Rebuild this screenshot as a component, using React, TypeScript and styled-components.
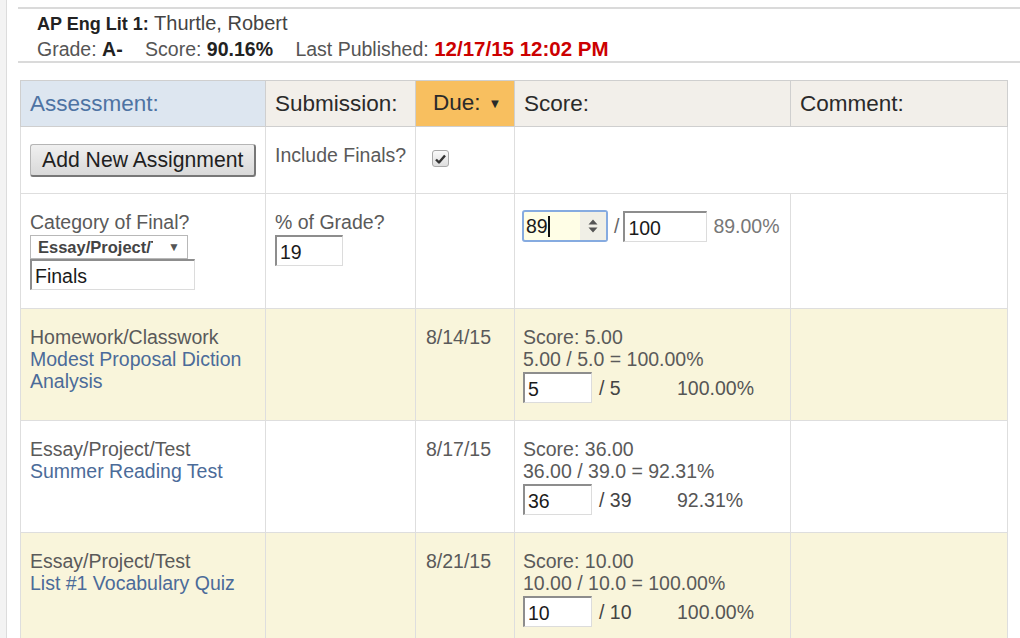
import styled, { createGlobalStyle } from "styled-components";

const GlobalStyle = createGlobalStyle`
  html, body {
    margin: 0;
    padding: 0;
    background: #ffffff;
    font-family: "Liberation Sans", Arial, sans-serif;
  }
`;

const Page = styled.div`
  display: flex;
  min-height: 638px;
`;

const SideStrip = styled.div`
  width: 6px;
  flex: none;
  background: #f3f3f3;
  border-right: 1px solid #dcdcdc;
`;

const Main = styled.main`
  flex: 1;
  padding-top: 7px;
`;

const InfoBar = styled.header`
  margin-left: 11px;
  border-top: 2px solid #dadada;
  border-bottom: 2px solid #dadada;
  padding: 2px 0 0 19px;
  font-size: 19.5px;
  color: #555;
`;

const InfoLine = styled.div`
  height: 25px;
  line-height: 25px;
  white-space: nowrap;
`;

const Strong = styled.b<{ $red?: boolean; $size?: number }>`
  color: ${(p) => (p.$red ? "#cc0000" : "#222")};
  font-weight: bold;
  font-size: ${(p) => (p.$size ? `${p.$size}px` : "inherit")};
`;

const Name = styled.span`
  color: #444;
  font-size: 20px;
`;

const Gap = styled.span`
  display: inline-block;
  width: 17px;
`;

const Table = styled.table`
  margin: 17px 0 0 13px;
  border-collapse: collapse;
  table-layout: fixed;
  width: 987px;
  font-size: 19.5px;
  line-height: 22px;
  color: #5a5a5a;
`;

const HeadCell = styled.th<{ $tone?: "blue" | "orange" }>`
  height: 45px;
  padding: 0 0 0 9px;
  text-align: left;
  font-weight: normal;
  font-size: 22.5px;
  border: 1px solid #cfcfcf;
  color: ${(p) => (p.$tone === "blue" ? "#4e73a3" : "#2a2a2a")};
  background: ${(p) =>
    p.$tone === "blue" ? "#dde6f0" : p.$tone === "orange" ? "#f8bf5f" : "#f2efea"};
  padding-left: ${(p) => (p.$tone === "orange" ? "17px" : "9px")};
`;

const Arrow = styled.span`
  font-size: 13px;
  margin-left: 8px;
  vertical-align: 2px;
`;

const Row = styled.tr<{ $h: number; $shade?: boolean }>`
  height: ${(p) => p.$h}px;
  background: ${(p) => (p.$shade ? "#f9f5db" : "#ffffff")};
`;

const Cell = styled.td<{ $pad?: number }>`
  vertical-align: top;
  border: 1px solid #dedede;
  padding: 17px 0 0 ${(p) => p.$pad ?? 9}px;
  white-space: nowrap;
  overflow: hidden;
`;

const Link = styled.div`
  color: #4b6b99;
`;

const Button = styled.button`
  margin: 0;
  height: 33px;
  padding: 0 11px;
  font-family: "Liberation Sans", Arial, sans-serif;
  font-size: 21.2px;
  color: #1f1f1f;
  background: linear-gradient(#f0f0f0, #d9d9d9);
  border: 1px solid #b5b5b5;
  border-right: 2px solid #777;
  border-bottom: 2px solid #777;
  border-radius: 3px;
`;

const CheckBox = styled.span`
  display: inline-flex;
  align-items: center;
  justify-content: center;
  margin: 6px 0 0 6px;
  width: 15px;
  height: 15px;
  border: 1px solid #a9a9a9;
  border-radius: 3px;
  background: linear-gradient(#fafafa, #dedede);
`;

const Select = styled.div`
  display: flex;
  align-items: center;
  margin-top: 2px;
  width: 158px;
  height: 24px;
  padding: 0 0 0 7px;
  box-sizing: border-box;
  border: 1px solid #b8b8b8;
  background: #fff;
  font-size: 16.5px;
  font-weight: bold;
  color: #444;
`;

const SelectText = styled.span`
  display: block;
  overflow: hidden;
  width: 115px;
  flex: none;
`;

const SelectArrow = styled.span`
  margin-left: 15px;
  font-size: 12px;
  color: #555;
`;

const Field = styled.div<{ $w: number }>`
  display: inline-block;
  vertical-align: top;
  width: ${(p) => p.$w}px;
  height: 31px;
  box-sizing: border-box;
  padding: 3px 0 0 3px;
  background: #fff;
  border: 1px solid #dcdcdc;
  border-top: 2px solid #8d8d8d;
  border-left: 2px solid #8d8d8d;
  font-size: 19.5px;
  line-height: 24px;
  color: #1a1a1a;
`;

const Stack = styled.div`
  margin-top: 2px;
`;

const ScoreLine = styled.div`
  display: flex;
  align-items: center;
  margin-top: 2px;
`;

const OutOf = styled.span`
  width: 85px;
  padding-left: 7px;
  box-sizing: border-box;
  color: #444;
`;

const Percent = styled.span<{ $muted?: boolean }>`
  color: ${(p) => (p.$muted ? "#777" : "#555")};
`;

const FocusField = styled.div`
  display: flex;
  align-items: center;
  width: 86px;
  height: 32px;
  box-sizing: border-box;
  border: 2px solid #86abe0;
  border-radius: 3px;
  background: #fffee6;
  padding-left: 2px;
  color: #1a1a1a;
`;

const Caret = styled.span`
  display: inline-block;
  width: 2px;
  height: 21px;
  background: #111;
`;

const Spinner = styled.span`
  margin-left: auto;
  display: flex;
  align-items: center;
  justify-content: center;
  width: 26px;
  height: 100%;
  background: #f0efe6;
`;

const Slash = styled.span`
  margin: 0 4px 0 6px;
  color: #666;
`;

const PlainScoreRow = styled.div`
  display: flex;
  align-items: center;
  margin-top: -1px;
`;

const Check = () => (
  <svg width="11" height="10" viewBox="0 0 11 10">
    <path d="M1 5.5 L4 8.5 L10 1.5" fill="none" stroke="#333" strokeWidth="2.4" strokeLinejoin="round" />
  </svg>
);

const SpinArrows = () => (
  <svg width="10" height="14" viewBox="0 0 10 14">
    <path d="M5 0.5 L9.5 5.5 H0.5 Z M5 13.5 L9.5 8.5 H0.5 Z" fill="#555" />
  </svg>
);

type Assignment = {
  category: string;
  title: string[];
  due: string;
  score: string;
  possible: string;
  pct: string;
};

const assignments: Assignment[] = [
  {
    category: "Homework/Classwork",
    title: ["Modest Proposal Diction", "Analysis"],
    due: "8/14/15",
    score: "5",
    possible: "5",
    pct: "100.00%",
  },
  {
    category: "Essay/Project/Test",
    title: ["Summer Reading Test"],
    due: "8/17/15",
    score: "36",
    possible: "39",
    pct: "92.31%",
  },
  {
    category: "Essay/Project/Test",
    title: ["List #1 Vocabulary Quiz"],
    due: "8/21/15",
    score: "10",
    possible: "10",
    pct: "100.00%",
  },
];

const fixed = (v: string) => Number(v).toFixed(2);

export default function App() {
  return (
    <>
      <GlobalStyle />
      <Page>
        <SideStrip />
        <Main>
          <InfoBar>
            <InfoLine>
              <Strong $size={18}>AP Eng Lit 1:</Strong> <Name>Thurtle, Robert</Name>
            </InfoLine>
            <InfoLine>
              Grade: <Strong>A-</Strong>
              <Gap /> Score: <Strong>90.16%</Strong>
              <Gap /> Last Published: <Strong $red $size={20.5}>12/17/15 12:02 PM</Strong>
            </InfoLine>
          </InfoBar>

          <Table>
            <colgroup>
              <col style={{ width: 245 }} />
              <col style={{ width: 150 }} />
              <col style={{ width: 99 }} />
              <col style={{ width: 276 }} />
              <col style={{ width: 217 }} />
            </colgroup>
            <thead>
              <tr>
                <HeadCell $tone="blue">Assessment:</HeadCell>
                <HeadCell>Submission:</HeadCell>
                <HeadCell $tone="orange">
                  Due:<Arrow>▼</Arrow>
                </HeadCell>
                <HeadCell>Score:</HeadCell>
                <HeadCell>Comment:</HeadCell>
              </tr>
            </thead>
            <tbody>
              <Row $h={67}>
                <Cell>
                  <Button>Add New Assignment</Button>
                </Cell>
                <Cell>Include Finals?</Cell>
                <Cell $pad={10}>
                  <CheckBox>
                    <Check />
                  </CheckBox>
                </Cell>
                <Cell colSpan={2} />
              </Row>

              <Row $h={115}>
                <Cell>
                  Category of Final?
                  <Select>
                    <SelectText>Essay/Project/Test</SelectText>
                    <SelectArrow>▼</SelectArrow>
                  </Select>
                  <Field $w={165}>Finals</Field>
                </Cell>
                <Cell>
                  % of Grade?
                  <Stack>
                    <Field $w={68}>19</Field>
                  </Stack>
                </Cell>
                <Cell />
                <Cell $pad={7}>
                  <PlainScoreRow>
                    <FocusField>
                      89
                      <Caret />
                      <Spinner>
                        <SpinArrows />
                      </Spinner>
                    </FocusField>
                    <Slash>/</Slash>
                    <Field $w={84}>100</Field>
                    <Percent $muted style={{ marginLeft: 6 }}>
                      89.00%
                    </Percent>
                  </PlainScoreRow>
                </Cell>
                <Cell />
              </Row>

              {assignments.map((a, i) => (
                <Row key={a.title[0]} $h={112} $shade={i % 2 === 0}>
                  <Cell>
                    {a.category}
                    {a.title.map((t) => (
                      <Link key={t}>{t}</Link>
                    ))}
                  </Cell>
                  <Cell />
                  <Cell $pad={10}>{a.due}</Cell>
                  <Cell $pad={8}>
                    <div>Score: {fixed(a.score)}</div>
                    <div>
                      {fixed(a.score)} / {Number(a.possible).toFixed(1)} = {a.pct}
                    </div>
                    <ScoreLine>
                      <Field $w={69}>{a.score}</Field>
                      <OutOf>/ {a.possible}</OutOf>
                      <Percent>{a.pct}</Percent>
                    </ScoreLine>
                  </Cell>
                  <Cell />
                </Row>
              ))}
            </tbody>
          </Table>
        </Main>
      </Page>
    </>
  );
}
